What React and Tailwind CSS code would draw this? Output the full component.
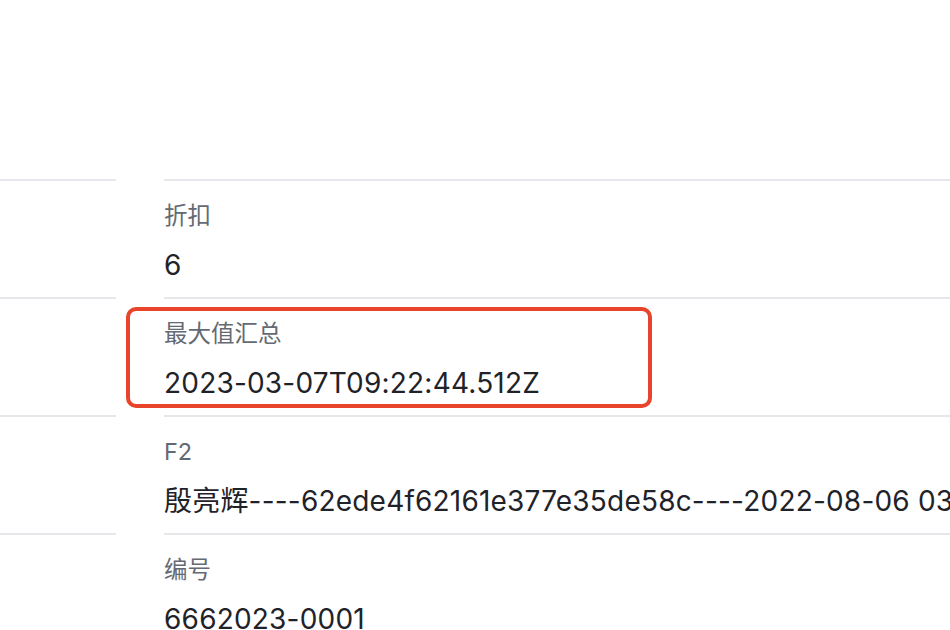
const rows = [
  { label: '折扣', value: '6' },
  { label: '最大值汇总', value: '2023-03-07T09:22:44.512Z' },
  { label: 'F2', value: '殷亮辉----62ede4f62161e377e35de58c----2022-08-06 03:12:45' },
  { label: '编号', value: '6662023-0001' },
];

const Field = ({ label, value }) => (
  <div className="h-[118px] border-t-2 border-[#e6e6eb] pt-[20px] whitespace-nowrap">
    <div className="text-[23.5px] leading-[30px] text-[#646a73]">{label}</div>
    <div className="mt-[17px] text-[28px] leading-[34px] tracking-[0.2px] text-[#1f2329]">{value}</div>
  </div>
);

export default function App() {
  return (
    <div
      className="relative w-[950px] h-[630px] overflow-hidden bg-white"
      style={{ fontFamily: 'Inter, "Noto Sans CJK SC", sans-serif' }}
    >
      <div className="h-[179px]" />
      <div className="flex gap-[48px]">
        <div className="w-[116px] shrink-0">
          {rows.map((r) => (
            <div key={r.label} className="h-[118px] border-t-2 border-[#e6e6eb]" />
          ))}
        </div>
        <div className="flex-1 min-w-0">
          {rows.map((r) => (
            <Field key={r.label} label={r.label} value={r.value} />
          ))}
        </div>
      </div>
      {/* highlight annotation */}
      <div className="absolute left-[126px] top-[307px] w-[526px] h-[101px] border-[4px] border-[#e8442b] rounded-[10px]" />
    </div>
  );
}
